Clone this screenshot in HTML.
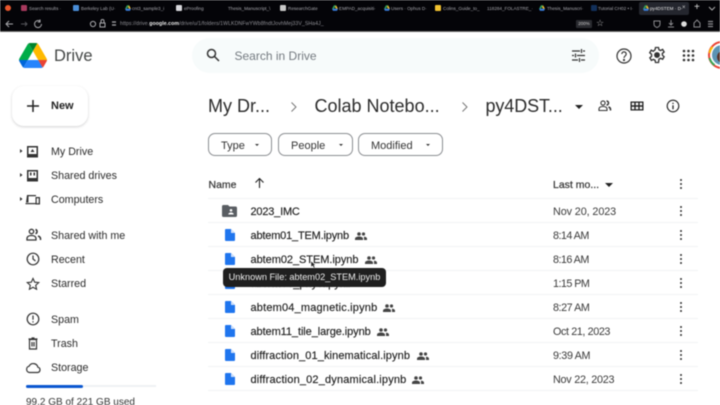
<!DOCTYPE html>
<html><head><meta charset="utf-8">
<style>
html,body{margin:0;padding:0;background:#fff}
#p{position:relative;width:720px;height:405px;overflow:hidden;background:#fff;font-family:"Liberation Sans",sans-serif;color:#1f1f1f;filter:blur(.45px)}
.t{position:absolute;white-space:nowrap;line-height:1}
.a{position:absolute}
.tab{position:absolute;top:6px;font-size:4.6px;color:#a8a8ae;white-space:nowrap;line-height:6px}
.ic{position:absolute;top:5px;width:6px;height:6px;border-radius:1px}
.dr{position:absolute;top:5px;width:6px;height:6px}
.nav{position:absolute;left:51px;margin-top:1px;font-size:10.700px;color:#2b2b2b;line-height:1;white-space:nowrap}
.f{position:absolute;left:250.500px;margin-top:1px;font-size:11px;font-weight:500;color:#202020;-webkit-text-stroke:.15px #202020;line-height:1;white-space:nowrap}
.d{position:absolute;left:553px;margin-top:1px;font-size:10.800px;color:#3a3a3a;line-height:1;white-space:nowrap}
.sep{position:absolute;left:208px;width:490px;height:1px;background:#f1f3f4}
.doc{position:absolute;left:225px;width:10px;height:12px}
.dots{position:absolute;left:679.500px;width:2px;height:2px;background:#333;border-radius:50%;box-shadow:0 -4px 0 #333,0 4px 0 #333}
.chip{position:absolute;top:133px;height:23px;border:1px solid #8b8e92;border-radius:7px;box-sizing:border-box;font-size:11px;color:#333;line-height:24px;padding-left:12px}
.chip i{position:absolute;top:9.500px;border-left:2.700px solid transparent;border-right:2.700px solid transparent;border-top:2.700px solid #333}
.pp{position:absolute;width:12px;height:8px}
.bc{position:absolute;top:97px;font-size:18px;color:#2b2b2b;line-height:1;white-space:nowrap}
</style></head><body><div id="p">
<svg width="0" height="0" style="position:absolute"><defs>
<symbol id="drv" viewBox="0 0 12 11"><path d="M4 0h4L4 7H0z" fill="#2f9e5a"/><path d="M8 0l4 7H8L6 3.500z" fill="#f2bf32"/><path d="M0 7h12l-2 4H2z" fill="#3d84e6"/></symbol>
<symbol id="doc" viewBox="0 0 10 12"><path d="M1 0h5l4 4v7a1 1 0 0 1-1 1H1a1 1 0 0 1-1-1V1a1 1 0 0 1 1-1z" fill="#1f75ee"/><path d="M6 0l4 4H6z" fill="#cfe0fb"/></symbol>
<symbol id="pp" viewBox="0 0 12 8"><circle cx="4" cy="2" r="1.800" fill="#444"/><path d="M0 8V6.700C0 5.300 1.800 4.500 4 4.500s4 .8 4 2.200V8z" fill="#444"/><circle cx="8.500" cy="2" r="1.600" fill="#444"/><path d="M9 4.600c1.700.2 3 .9 3 2.100V8H9z" fill="#444"/></symbol></defs></svg>

<div class="a" style="left:0;top:0;width:720px;height:31px;background:#040408"></div>
<div class="a" style="left:0;top:31px;width:720px;height:1px;background:#6a6a6a"></div>

<div class="a" style="left:5px;top:5px;width:6px;height:6px;border-radius:50%;background:#e8562d"></div>
<div class="ic" style="left:21px;background:#a83a5e"></div><div class="tab" style="left:29px">Search results ·</div>
<div class="ic" style="left:73px;background:#4a8ed8"></div><div class="tab" style="left:81px">Berkeley Lab (U·</div>
<svg class="dr" style="left:125px"><use href="#drv"/></svg><div class="tab" style="left:132px">cnt3_sample3_i</div>
<div class="ic" style="left:176px;background:#d8d8dc"></div><div class="tab" style="left:184px">eProofing</div>
<div class="tab" style="left:228px">Thesis_Manuscript_\</div>
<div class="ic" style="left:280px;background:#c8c8c8"></div><div class="tab" style="left:288px">ResearchGate</div>
<svg class="dr" style="left:332px"><use href="#drv"/></svg><div class="tab" style="left:339px">EMPAD_acquisiti·</div>
<svg class="dr" style="left:384px"><use href="#drv"/></svg><div class="tab" style="left:391px">Users · Ophus D·</div>
<div class="ic" style="left:435px;background:#f2c230"></div><div class="tab" style="left:443px">Colins_Guide_to_</div>
<div class="tab" style="left:487px">118284_FOLASTRE_·</div>
<svg class="dr" style="left:539px"><use href="#drv"/></svg><div class="tab" style="left:547px">Thesis_Manuscri·</div>
<div class="ic" style="left:591px;background:#12305a"></div><div class="tab" style="left:598px">Tutorial CH02 • I·</div>
<div class="a" style="left:639px;top:2px;width:50px;height:13px;background:#24262e;border-radius:2px"></div>
<svg class="dr" style="left:643px"><use href="#drv"/></svg><div class="tab" style="left:650px;color:#e8e8e8">py4DSTEM · D·</div>
<div class="t" style="left:682px;top:5px;font-size:6px;color:#ccc">×</div>
<div class="t" style="left:694px;top:3px;font-size:10px;color:#ddd">+</div>
<svg class="a" style="left:708px;top:6px" width="8" height="5"><path d="M1 1l3 3 3-3" fill="none" stroke="#aaa" stroke-width="1"/></svg>

<svg class="a" style="left:0;top:17px" width="360" height="14" fill="none" stroke="#a8a8ac" stroke-width="1">
<path d="M13 7H6M9 4L6 7l3 3"/><path d="M21 7h6M25 5l2 2-2 2" stroke="#55555a"/><path d="M40 4.200a3.500 3.500 0 1 0 1.500 2.800M40 2.500v2.500h-2.200"/>
<circle cx="93" cy="7" r="2.600"/><rect x="100" y="6" width="5" height="4"/><path d="M101 6V4a1.500 1.500 0 0 1 3 0v2"/><path d="M112 5h4M112 8h4" stroke-width="1.200"/></svg>
<div class="t" style="left:120px;top:21.500px;font-size:5.200px;color:#8f8f95;letter-spacing:.07px">https://drive.<span style="color:#eee;font-weight:bold">google.com</span>/drive/u/1/folders/1WLKDNFwYWb8fndtJovhMej33V_SHa4J_</div>
<div class="a" style="left:576px;top:20px;width:16px;height:8px;background:#2a2b30;border-radius:1px;color:#ccc;font-size:4.500px;line-height:8px;text-align:center">200%</div>
<div class="t" style="left:596px;top:19px;font-size:9px;color:#bbb">☆</div>
<svg class="a" style="left:650px;top:17px" width="70" height="14" fill="none" stroke="#8a8a8e" stroke-width="1">
<path d="M4 4h6v3c0 2-1.500 3-3 3.500C5.500 10 4 9 4 7z"/><path d="M21 3v5M19 6l2 2 2-2M18 10h6"/><circle cx="34" cy="7" r="2.800" fill="#ddd" stroke="none"/><path d="M44 10V6l3-3 3 3v4z"/><path d="M58 4.500h5M58 7h5M58 9.500h5" stroke-width="1.300"/></svg>

<svg class="a" style="left:19px;top:43px" width="28" height="25" viewBox="0 0 87.300 78">
<path d="M6.600 66.850l3.850 6.650c.8 1.400 1.950 2.500 3.300 3.300l13.750-23.800H0c0 1.550.4 3.100 1.200 4.500z" fill="#0066da"/>
<path d="M43.650 25L29.900 1.200c-1.350.8-2.500 1.900-3.300 3.300L1.200 48.500A9 9 0 0 0 0 53h27.500z" fill="#00ac47"/>
<path d="M73.550 76.800c1.350-.8 2.500-1.900 3.300-3.300l1.600-2.750 7.650-13.250c.8-1.400 1.200-2.950 1.200-4.500H59.800l5.850 11.500z" fill="#ea4335"/>
<path d="M43.650 25L57.400 1.200C56.050.4 54.500 0 52.900 0H34.400c-1.600 0-3.150.45-4.500 1.200z" fill="#00832d"/>
<path d="M59.800 53H27.500L13.750 76.800c1.350.8 2.900 1.200 4.500 1.200h50.800c1.600 0 3.150-.45 4.500-1.200z" fill="#2684fc"/>
<path d="M73.400 26.500l-12.700-22c-.8-1.400-1.950-2.500-3.300-3.300L43.650 25 59.800 53h27.450c0-1.550-.4-3.100-1.200-4.500z" fill="#ffba00"/></svg>
<div class="t" style="left:54px;top:47.500px;font-size:16.500px;color:#444746">Drive</div>

<div class="a" style="left:192px;top:38px;width:407px;height:35px;border-radius:18px;background:#f7fbfb"></div>
<svg class="a" style="left:205px;top:47px" width="16" height="16" fill="none" stroke="#333" stroke-width="1.500"><circle cx="6.500" cy="6.500" r="4"/><path d="M9.500 9.500L14 14"/></svg>
<div class="t" style="left:234.500px;top:49.500px;font-size:12px;color:#747a80">Search in Drive</div>
<svg class="a" style="left:571px;top:48px" width="15" height="15" fill="none" stroke="#333" stroke-width="1.200"><path d="M1 3h8M12 3h2M10.500 1v4M1 7.500h2M6 7.500h8M4.500 5.500v4M1 12h6M10 12h4M8.500 10v4"/></svg>
<svg class="a" style="left:615px;top:47px" width="18" height="18" fill="none" stroke="#333" stroke-width="1.200"><circle cx="9" cy="9" r="7"/><path d="M6.800 7a2.200 2.200 0 1 1 3.500 1.800C9.300 9.500 9 10 9 11"/><circle cx="9" cy="13" r=".5"/></svg>
<svg class="a" style="left:648px;top:46px" width="18" height="18" viewBox="0 0 24 24" fill="none" stroke="#333" stroke-width="1.800"><path d="M10 2h4l.6 3 2.200 1 2.700-1.500 2 3.400-2.400 2 .1 2.400 2.300 2-2 3.400-2.700-1.300-2.200 1.200L14 22h-4l-.6-3-2.200-1.200-2.700 1.300-2-3.400 2.300-2L4.700 11 2.300 8.900l2-3.400L7 7l2.400-2z"/><circle cx="12" cy="12" r="3" fill="#333"/></svg>
<svg class="a" style="left:682px;top:49px" width="13" height="13" fill="#333"><circle cx="2" cy="2" r="1.300"/><circle cx="6.500" cy="2" r="1.300"/><circle cx="11" cy="2" r="1.300"/><circle cx="2" cy="6.500" r="1.300"/><circle cx="6.500" cy="6.500" r="1.300"/><circle cx="11" cy="6.500" r="1.300"/><circle cx="2" cy="11" r="1.300"/><circle cx="6.500" cy="11" r="1.300"/><circle cx="11" cy="11" r="1.300"/></svg>
<svg class="a" style="left:708px;top:40px" width="12" height="30"><circle cx="14" cy="15" r="13" fill="none" stroke="#ea4335" stroke-width="2"/><path d="M1.500 18a13 13 0 0 0 5 7" fill="none" stroke="#34a853" stroke-width="2"/><path d="M1.500 13a13 13 0 0 1 3-6" fill="none" stroke="#fbbc04" stroke-width="2"/><circle cx="14" cy="15" r="10" fill="#5c94b4"/><circle cx="15" cy="17" r="6" fill="#5a352c"/></svg>

<div class="a" style="left:12px;top:86px;width:76px;height:40px;border-radius:12px;background:#fff;box-shadow:0 1px 2px rgba(60,64,67,.16),0 1px 3px rgba(60,64,67,.08)"></div>
<svg class="a" style="left:26px;top:99px" width="14" height="14" stroke="#222" stroke-width="1.500"><path d="M7 1v12M1 7h12"/></svg>
<div class="t" style="left:51px;top:101px;font-size:11px;font-weight:bold;color:#222">New</div>

<svg class="a" style="left:19px;top:146px" width="24" height="60" fill="#333">
<path d="M1 3l2.500 2L1 7zM1 27l2.500 2L1 31zM1 51l2.500 2L1 55z"/>
<path d="M8 0h11v11.500H8zM9.500 1.500v6.500h8V1.500z" fill-rule="evenodd"/><path d="M11.500 6l2-3 2 3z"/>
<path d="M8 24h11v11.500H8zM9.500 25.500v6.500h8v-6.500z" fill-rule="evenodd"/><rect x="11" y="26.500" width="1.500" height="3"/><rect x="14.500" y="26.500" width="1.500" height="3"/>
<path d="M8 49h9v1.200H9.500v6.300H7z"/><path d="M6.500 57h10v1.200h-10z"/><path d="M16.500 51h4.500v7.500h-4.500zM17.700 52.200v5h2v-5z" fill-rule="evenodd"/></svg>
<div class="nav" style="top:146px">My Drive</div>
<div class="nav" style="top:170px">Shared drives</div>
<div class="nav" style="top:194px">Computers</div>

<svg class="a" style="left:26px;top:228px" width="16" height="14" fill="none" stroke="#333" stroke-width="1.300"><circle cx="5.500" cy="3.500" r="2.200"/><path d="M1 12V10.500c0-2 2-3 4.500-3s4.500 1 4.500 3V12z"/><path d="M9.500 1.500a2.200 2.200 0 0 1 0 4.200M12 8c1.500.5 2.500 1.300 2.500 2.700V12" stroke-width="1.500"/></svg>
<div class="nav" style="top:230px">Shared with me</div>
<svg class="a" style="left:26px;top:252px" width="14" height="14" fill="none" stroke="#333" stroke-width="1.200"><circle cx="7" cy="7" r="5.800"/><path d="M7 3.500V7l2.500 2"/></svg>
<div class="nav" style="top:254px">Recent</div>
<svg class="a" style="left:26px;top:277px" width="14" height="13" fill="none" stroke="#333" stroke-width="1.100"><path d="M7 1.500l1.700 3.700 4 .4-3 2.700.9 4L7 10.300l-3.600 2 .9-4-3-2.700 4-.4z"/></svg>
<div class="nav" style="top:278px">Starred</div>
<svg class="a" style="left:26px;top:312px" width="14" height="14" fill="none" stroke="#333" stroke-width="1.200"><circle cx="7" cy="7" r="5.800"/><path d="M7 3.500v4.200M7 9.300v1.200"/></svg>
<div class="nav" style="top:314px">Spam</div>
<svg class="a" style="left:27px;top:337px" width="12" height="13" fill="none" stroke="#333" stroke-width="1.200"><path d="M2.500 2.500h7V12h-7zM1.500 2h9M4.500 1h3M5 5v4.500M7 5v4.500"/></svg>
<div class="nav" style="top:338px">Trash</div>
<svg class="a" style="left:25px;top:361px" width="17" height="13" fill="none" stroke="#333" stroke-width="1.200"><path d="M4.500 11.500a3.200 3.200 0 0 1-.4-6.300 4.700 4.700 0 0 1 8.800 1 2.700 2.700 0 0 1-.2 5.300z"/></svg>
<div class="nav" style="top:362px">Storage</div>
<div class="a" style="left:26px;top:385px;width:130px;height:2px;background:#eef1f3"></div>
<div class="a" style="left:26px;top:385px;width:57px;height:3px;border-radius:2px;background:#0b57d0"></div>
<div class="nav" style="left:26px;top:396.500px;font-size:10px;color:#333">99.2 GB of 221 GB used</div>

<div class="bc" style="left:208px">My Dr...</div>
<svg class="a" style="left:290px;top:101px" width="8" height="12" fill="none" stroke="#777" stroke-width="1"><path d="M1.500 1.500L6 6l-4.500 4.500"/></svg>
<div class="bc" style="left:314.500px">Colab Notebo...</div>
<svg class="a" style="left:461px;top:101px" width="8" height="12" fill="none" stroke="#777" stroke-width="1"><path d="M1.500 1.500L6 6l-4.500 4.500"/></svg>
<div class="bc" style="left:485.500px;letter-spacing:-.1px">py4DST...</div>
<div class="a" style="left:575px;top:105px;border-left:4px solid transparent;border-right:4px solid transparent;border-top:4px solid #222"></div>
<svg class="a" style="left:598px;top:100px" width="14" height="12" fill="none" stroke="#333" stroke-width="1.100"><circle cx="5" cy="3" r="2.100"/><path d="M1 10.500V9c0-1.700 1.800-2.500 4-2.500S9 7.300 9 9v1.500z"/><path d="M8.500 1a2 2 0 0 1 0 4M10.500 7c1.200.4 2 1 2 2.200v1.300" stroke-width="1.500"/></svg>
<svg class="a" style="left:630px;top:101px" width="14" height="10" fill="#222"><path d="M.5.500h13v9H.5zM1.800 1.800v2.500h2.500V1.800zM5.700 1.800v2.500h2.600V1.800zM9.700 1.800v2.500h2.500V1.800zM1.800 5.700v2.600h2.500V5.700zM5.700 5.700v2.600h2.600V5.700zM9.700 5.700v2.600h2.500V5.700z" fill-rule="evenodd"/></svg>
<svg class="a" style="left:666px;top:99px" width="14" height="14" fill="none" stroke="#222" stroke-width="1.100"><circle cx="7" cy="7" r="5.800"/><path d="M7 6.300v4M7 3.800v1.200" stroke-width="1.300"/></svg>

<div class="chip" style="left:208px;width:64px">Type<i style="left:46px"></i></div>
<div class="chip" style="left:278px;width:75px">People<i style="left:60px"></i></div>
<div class="chip" style="left:358px;width:85px">Modified<i style="left:67px"></i></div>

<div class="t" style="left:208.500px;top:180px;font-size:10.500px;font-weight:500;color:#333;-webkit-text-stroke:.2px #333">Name</div>
<svg class="a" style="left:254px;top:177px" width="11" height="12" fill="none" stroke="#222" stroke-width="1.100"><path d="M5.500 11V1.500M1.500 5.500l4-4 4 4"/></svg>
<div class="t" style="left:553px;top:180px;font-size:10.500px;font-weight:500;color:#333;-webkit-text-stroke:.2px #333">Last mo...</div>
<div class="a" style="left:605px;top:183px;border-left:4px solid transparent;border-right:4px solid transparent;border-top:4px solid #222"></div>
<div class="dots" style="top:183px"></div>

<div class="sep" style="top:198px"></div><div class="sep" style="top:222px"></div><div class="sep" style="top:246px"></div><div class="sep" style="top:270px"></div><div class="sep" style="top:294px"></div><div class="sep" style="top:318px"></div><div class="sep" style="top:342px"></div><div class="sep" style="top:366px"></div><div class="sep" style="top:390px"></div>

<svg class="a" style="left:222px;top:205px" width="15" height="12"><path d="M1.500 0h4.500l1.500 1.500h6a1.500 1.500 0 0 1 1.500 1.500v7.500a1.500 1.500 0 0 1-1.500 1.500h-12A1.500 1.500 0 0 1 0 10.500v-9A1.500 1.500 0 0 1 1.500 0z" fill="#5a5e63"/><circle cx="9" cy="5.300" r="1.300" fill="#fff"/><path d="M6.300 9.500c0-1.400 1.300-2 2.700-2s2.700.6 2.700 2z" fill="#fff"/></svg>
<div class="f" style="top:206px;letter-spacing:-.2px">2023_IMC</div><div class="d" style="top:206px;letter-spacing:-.1px">Nov 20, 2023</div><div class="dots" style="top:210px"></div>

<svg class="doc" style="top:229px"><use href="#doc"/></svg>
<div class="f" style="top:230px;letter-spacing:-.18px">abtem01_TEM.ipynb</div><svg class="pp" style="left:355px;top:232px"><use href="#pp"/></svg><div class="d" style="top:230px;letter-spacing:-.55px">8:14 AM</div><div class="dots" style="top:234px"></div>

<svg class="doc" style="top:253px"><use href="#doc"/></svg>
<div class="f" style="top:254px;letter-spacing:-.05px">abtem02_STEM.ipynb</div><svg class="pp" style="left:364.500px;top:256px"><use href="#pp"/></svg><div class="d" style="top:254px;letter-spacing:-.55px">8:16 AM</div><div class="dots" style="top:258px"></div>

<svg class="doc" style="top:277px"><use href="#doc"/></svg>
<div class="f" style="top:278px">abtem03_phys.ipynb</div><div class="d" style="top:278px;letter-spacing:-.55px">1:15 PM</div><div class="dots" style="top:282px"></div>

<svg class="doc" style="top:301px"><use href="#doc"/></svg>
<div class="f" style="top:302px;letter-spacing:.18px">abtem04_magnetic.ipynb</div><svg class="pp" style="left:383px;top:304px"><use href="#pp"/></svg><div class="d" style="top:302px;letter-spacing:-.45px">8:27 AM</div><div class="dots" style="top:306px"></div>

<svg class="doc" style="top:325px"><use href="#doc"/></svg>
<div class="f" style="top:326px;letter-spacing:-.08px">abtem11_tile_large.ipynb</div><svg class="pp" style="left:377px;top:328px"><use href="#pp"/></svg><div class="d" style="top:326px;letter-spacing:-.4px">Oct 21, 2023</div><div class="dots" style="top:330px"></div>

<svg class="doc" style="top:349px"><use href="#doc"/></svg>
<div class="f" style="top:350px;letter-spacing:.1px">diffraction_01_kinematical.ipynb</div><svg class="pp" style="left:416.500px;top:352px"><use href="#pp"/></svg><div class="d" style="top:350px;letter-spacing:-.35px">9:39 AM</div><div class="dots" style="top:354px"></div>

<svg class="doc" style="top:373px"><use href="#doc"/></svg>
<div class="f" style="top:374px;letter-spacing:.17px">diffraction_02_dynamical.ipynb</div><svg class="pp" style="left:412px;top:376px"><use href="#pp"/></svg><div class="d" style="top:374px;letter-spacing:-.25px">Nov 22, 2023</div><div class="dots" style="top:378px"></div>

<div class="a" style="left:223px;top:268px;width:163px;height:19px;border-radius:4px;background:#1f1f1f;color:#eee;font-size:9.200px;line-height:19px;text-align:center;white-space:nowrap">Unknown File: abtem02_STEM.ipynb</div>
<svg class="a" style="left:310px;top:261px" width="6" height="8"><path d="M1 0v6l1.500-1.300L4 7l1-.5-1.200-2.200H5.500z" fill="#222" stroke="#fff" stroke-width=".4"/></svg>
</div></body></html>
